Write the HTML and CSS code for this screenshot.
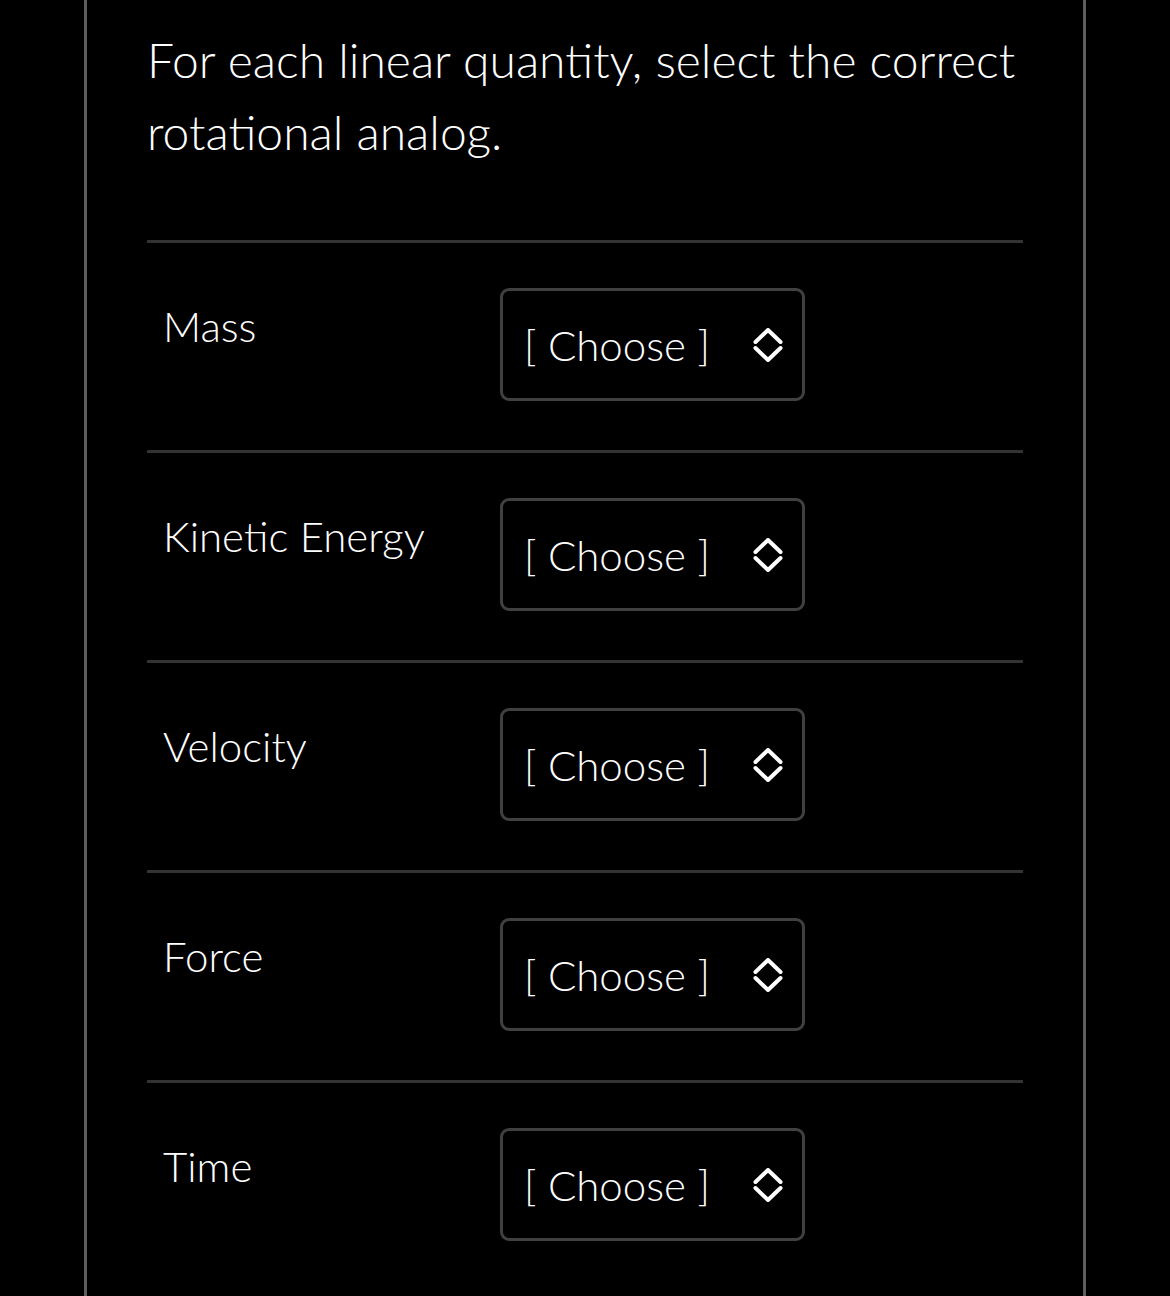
FILE: index.html
```html
<!DOCTYPE html>
<html lang="en">
<head>
    <meta charset="UTF-8">
    <meta name="viewport" content="width=device-width, initial-scale=1.0">
    <title>Matching Question</title>
    <link rel="stylesheet" href="styles.css">
</head>
<body>
    <div class="question">
        <p class="prompt">For each linear quantity, select the correct rotational analog.</p>

        <div class="answers">
            <div class="answer-row">
                <label class="answer-label" for="q1">Mass</label>
                <div class="select-wrap">
                    <select id="q1" class="answer-select">
                        <option>[ Choose ]</option>
                    </select>
                    <svg class="select-arrows" viewBox="0 0 32 34" width="32" height="34"><path d="M3.5 14 L16 2 L28.5 14 M3.5 20 L16 32 L28.5 20" fill="none" stroke="#fff" stroke-width="4" stroke-linecap="round" stroke-linejoin="round"/></svg>
                </div>
            </div>

            <div class="answer-row">
                <label class="answer-label" for="q2">Kinetic Energy</label>
                <div class="select-wrap">
                    <select id="q2" class="answer-select">
                        <option>[ Choose ]</option>
                    </select>
                    <svg class="select-arrows" viewBox="0 0 32 34" width="32" height="34"><path d="M3.5 14 L16 2 L28.5 14 M3.5 20 L16 32 L28.5 20" fill="none" stroke="#fff" stroke-width="4" stroke-linecap="round" stroke-linejoin="round"/></svg>
                </div>
            </div>

            <div class="answer-row">
                <label class="answer-label" for="q3">Velocity</label>
                <div class="select-wrap">
                    <select id="q3" class="answer-select">
                        <option>[ Choose ]</option>
                    </select>
                    <svg class="select-arrows" viewBox="0 0 32 34" width="32" height="34"><path d="M3.5 14 L16 2 L28.5 14 M3.5 20 L16 32 L28.5 20" fill="none" stroke="#fff" stroke-width="4" stroke-linecap="round" stroke-linejoin="round"/></svg>
                </div>
            </div>

            <div class="answer-row">
                <label class="answer-label" for="q4">Force</label>
                <div class="select-wrap">
                    <select id="q4" class="answer-select">
                        <option>[ Choose ]</option>
                    </select>
                    <svg class="select-arrows" viewBox="0 0 32 34" width="32" height="34"><path d="M3.5 14 L16 2 L28.5 14 M3.5 20 L16 32 L28.5 20" fill="none" stroke="#fff" stroke-width="4" stroke-linecap="round" stroke-linejoin="round"/></svg>
                </div>
            </div>

            <div class="answer-row">
                <label class="answer-label" for="q5">Time</label>
                <div class="select-wrap">
                    <select id="q5" class="answer-select">
                        <option>[ Choose ]</option>
                    </select>
                    <svg class="select-arrows" viewBox="0 0 32 34" width="32" height="34"><path d="M3.5 14 L16 2 L28.5 14 M3.5 20 L16 32 L28.5 20" fill="none" stroke="#fff" stroke-width="4" stroke-linecap="round" stroke-linejoin="round"/></svg>
                </div>
            </div>
        </div>
    </div>
</body>
</html>
```

FILE: styles.css
```css
* {
    margin: 0;
    padding: 0;
    box-sizing: border-box;
}

body {
    background-color: #000000;
    color: #ffffff;
    font-family: 'Lato Light', 'Lato', 'Liberation Sans', sans-serif;
    font-weight: 300;
}

.question {
    width: 1002px;
    min-height: 100vh;
    margin: 0 auto;
    padding: 24px 60px 0;
    border-left: 3px solid #5e5e5e;
    border-right: 3px solid #5e5e5e;
}

.prompt {
    font-size: 48px;
    line-height: 72px;
    margin-bottom: 72px;
}

.answer-row {
    display: flex;
    align-items: flex-start;
    border-top: 3px solid #333333;
    padding: 45px 0 49px 16px;
}

.answer-label {
    width: 337px;
    font-size: 42px;
    line-height: 60px;
    padding-top: 8px;
}

.select-wrap {
    position: relative;
    width: 305px;
    height: 113px;
}

.answer-select {
    appearance: none;
    -webkit-appearance: none;
    width: 100%;
    height: 100%;
    padding-left: 21px;
    background: #000000;
    color: #ffffff;
    border: 3px solid #404040;
    border-radius: 9px;
    font-family: 'Lato Light', 'Lato', 'Liberation Sans', sans-serif;
    font-weight: 300;
    font-size: 42px;
}

.select-arrows {
    position: absolute;
    top: 40px;
    right: 21px;
    pointer-events: none;
}
```
